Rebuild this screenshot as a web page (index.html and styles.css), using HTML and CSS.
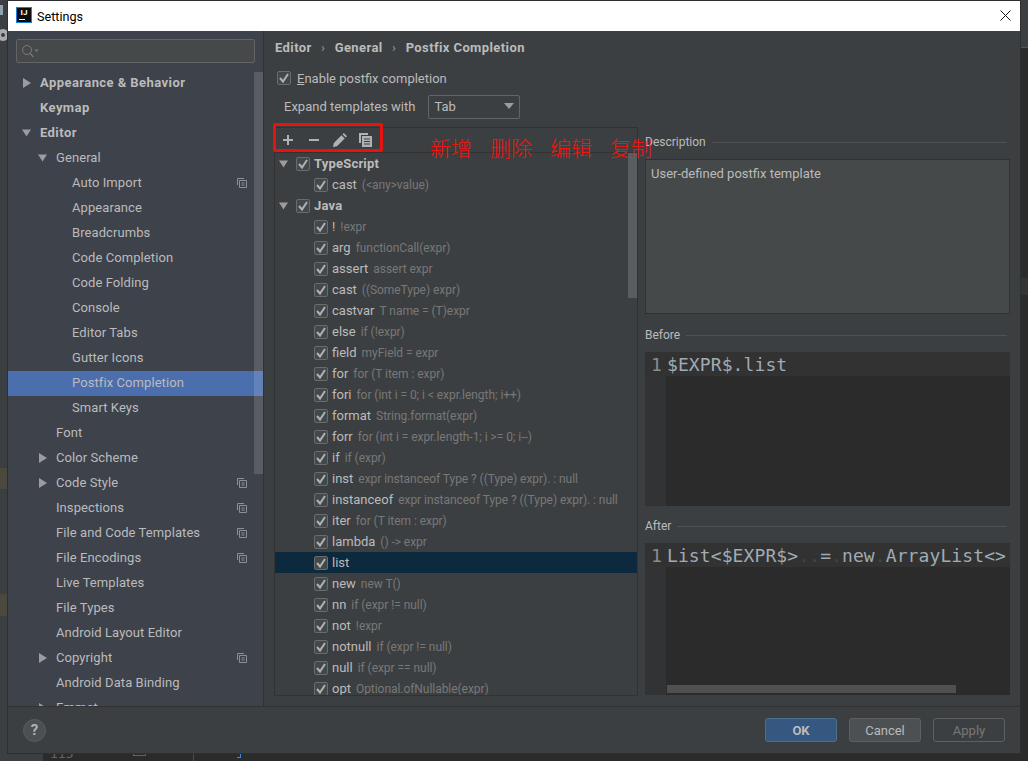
FILE: index.html
```html
<!DOCTYPE html>
<html lang="en">
  <head>
    <meta charset="UTF-8" />
    <meta name="viewport" content="width=device-width, initial-scale=1.0" />
    <title>Settings</title>

    <link rel="stylesheet" href="styles.css">
  </head>
  <body>
    <svg class="defs" width="0" height="0">
      <symbol id="right" viewBox="0 0 8 10"><path d="M0 0 L8 5 L0 10 Z" /></symbol>
      <symbol id="down" viewBox="0 0 10 8"><path d="M0 0 H10 L5 8 Z" /></symbol>
      <symbol id="check" viewBox="0 0 14 14"><path d="M3 7 L6 10.5 L11 3" fill="none" stroke="#afb1b3" stroke-width="2" /></symbol>
      <symbol id="project" viewBox="0 0 10 10">
        <path d="M7 .5 H.5 V7 M2.5 2.5 H9.5 V9.5 H2.5 Z M4.5 5 H7.5 M4.5 7 H7.5" fill="none" stroke="#8b9196" />
      </symbol>
    </svg>

    <!-- IDE behind the dialog -->
    <div class="ide">
      <div class="ide-left">
        <div class="ide-tab"></div>
        <div class="ide-gear"></div>
        <div class="ide-mark mark-1"></div>
        <div class="ide-mark mark-2"></div>
      </div>
      <div class="ide-right">
        <div class="ide-right-top"></div>
        <div class="ide-right-block"></div>
      </div>
      <div class="ide-bottom">
        <span class="ide-num">115</span>
        <span class="ide-fold"></span>
        <span class="ide-line"></span>
        <span class="ide-brace"></span>
      </div>
    </div>

    <div class="dialog">
      <div class="titlebar">
        <div class="logo"><span>IJ</span></div>
        <div class="title">Settings</div>
        <svg class="close" width="11" height="11" viewBox="0 0 11 11">
          <path d="M.5 .5 L10.5 10.5 M10.5 .5 L.5 10.5" stroke="#111" stroke-width="1" />
        </svg>
      </div>

      <div class="content">
        <div class="sidebar">
          <div class="search">
            <svg width="19" height="14" viewBox="0 0 19 14">
              <circle cx="6" cy="6" r="4.5" fill="none" stroke="#787a7c" />
              <path d="M9 9.5 L12.5 13" stroke="#787a7c" stroke-width="1.3" />
              <path d="M13.5 5.5 H17.5 L15.5 8 Z" fill="#787a7c" />
            </svg>
          </div>
          <div class="tree">
            <div class="node l0 bold"><svg class="arrow r"><use href="#right" /></svg>Appearance &amp; Behavior</div>
            <div class="node l0 bold"><span class="arrow"></span>Keymap</div>
            <div class="node l0 bold"><svg class="arrow d"><use href="#down" /></svg>Editor</div>
            <div class="node l1"><svg class="arrow d"><use href="#down" /></svg>General</div>
            <div class="node l2"><span class="arrow"></span>Auto Import<svg class="proj"><use href="#project" /></svg></div>
            <div class="node l2"><span class="arrow"></span>Appearance</div>
            <div class="node l2"><span class="arrow"></span>Breadcrumbs</div>
            <div class="node l2"><span class="arrow"></span>Code Completion</div>
            <div class="node l2"><span class="arrow"></span>Code Folding</div>
            <div class="node l2"><span class="arrow"></span>Console</div>
            <div class="node l2"><span class="arrow"></span>Editor Tabs</div>
            <div class="node l2"><span class="arrow"></span>Gutter Icons</div>
            <div class="node l2 selected"><span class="arrow"></span>Postfix Completion</div>
            <div class="node l2"><span class="arrow"></span>Smart Keys</div>
            <div class="node l1"><span class="arrow"></span>Font</div>
            <div class="node l1"><svg class="arrow r"><use href="#right" /></svg>Color Scheme</div>
            <div class="node l1"><svg class="arrow r"><use href="#right" /></svg>Code Style<svg class="proj"><use href="#project" /></svg></div>
            <div class="node l1"><span class="arrow"></span>Inspections<svg class="proj"><use href="#project" /></svg></div>
            <div class="node l1"><span class="arrow"></span>File and Code Templates<svg class="proj"><use href="#project" /></svg></div>
            <div class="node l1"><span class="arrow"></span>File Encodings<svg class="proj"><use href="#project" /></svg></div>
            <div class="node l1"><span class="arrow"></span>Live Templates</div>
            <div class="node l1"><span class="arrow"></span>File Types</div>
            <div class="node l1"><span class="arrow"></span>Android Layout Editor</div>
            <div class="node l1"><svg class="arrow r"><use href="#right" /></svg>Copyright<svg class="proj"><use href="#project" /></svg></div>
            <div class="node l1"><span class="arrow"></span>Android Data Binding</div>
            <div class="node l1"><svg class="arrow r"><use href="#right" /></svg>Emmet</div>
          </div>
          <div class="side-scroll"></div>
        </div>

        <div class="main">
          <div class="crumbs">
            <span>Editor</span><i>›</i><span>General</span><i>›</i><span>Postfix Completion</span>
          </div>
          <div class="enable">
            <span class="box"><svg><use href="#check" /></svg></span>
            <label><u>E</u>nable postfix completion</label>
          </div>
          <div class="expand">
            <label>Expand templates with</label>
            <div class="combo"><span>Tab</span><svg width="10" height="6" viewBox="0 0 10 6"><path d="M0 0 H10 L5 6 Z" fill="#9a9c9e" /></svg></div>
          </div>

          <div class="columns">
            <div class="list-panel">
              <div class="toolbar">
                <svg class="tool-add" width="12" height="12" viewBox="0 0 12 12"><path d="M6 1 V11 M1 6 H11" stroke="#afb1b3" stroke-width="2" /></svg>
                <svg width="12" height="12" viewBox="0 0 12 12"><path d="M1 6 H11" stroke="#afb1b3" stroke-width="2" /></svg>
                <svg width="14" height="14" viewBox="0 0 14 14"><path d="M0 14 L.8 10 L8.5 2.3 L11.7 5.5 L4 13.2 Z M9.5 1.3 L10.8 0 L14 3.2 L12.7 4.5 Z" fill="#afb1b3" /></svg>
                <svg class="tool-copy" width="13" height="14" viewBox="0 0 13 14"><path d="M0 0 H9 V2 H2 V10 H0 Z M3 3 H13 V14 H3 Z" fill="#afb1b3" /><path d="M5 6 H11 M5 8.5 H11 M5 11 H11" stroke="#3c3f41" /></svg>
              </div>
              <div class="rows">
                <div class="row group"><svg class="arrow d"><use href="#down" /></svg><span class="box"><svg><use href="#check" /></svg></span><b>TypeScript</b></div>
                <div class="row"><span class="box"><svg><use href="#check" /></svg></span><b>cast</b><em>(&lt;any&gt;value)</em></div>
                <div class="row group"><svg class="arrow d"><use href="#down" /></svg><span class="box"><svg><use href="#check" /></svg></span><b>Java</b></div>
                <div class="row"><span class="box"><svg><use href="#check" /></svg></span><b>!</b><em>!expr</em></div>
                <div class="row"><span class="box"><svg><use href="#check" /></svg></span><b>arg</b><em>functionCall(expr)</em></div>
                <div class="row"><span class="box"><svg><use href="#check" /></svg></span><b>assert</b><em>assert expr</em></div>
                <div class="row"><span class="box"><svg><use href="#check" /></svg></span><b>cast</b><em>((SomeType) expr)</em></div>
                <div class="row"><span class="box"><svg><use href="#check" /></svg></span><b>castvar</b><em>T name = (T)expr</em></div>
                <div class="row"><span class="box"><svg><use href="#check" /></svg></span><b>else</b><em>if (!expr)</em></div>
                <div class="row"><span class="box"><svg><use href="#check" /></svg></span><b>field</b><em>myField = expr</em></div>
                <div class="row"><span class="box"><svg><use href="#check" /></svg></span><b>for</b><em>for (T item : expr)</em></div>
                <div class="row"><span class="box"><svg><use href="#check" /></svg></span><b>fori</b><em>for (int i = 0; i &lt; expr.length; i++)</em></div>
                <div class="row"><span class="box"><svg><use href="#check" /></svg></span><b>format</b><em>String.format(expr)</em></div>
                <div class="row"><span class="box"><svg><use href="#check" /></svg></span><b>forr</b><em>for (int i = expr.length-1; i &gt;= 0; i--)</em></div>
                <div class="row"><span class="box"><svg><use href="#check" /></svg></span><b>if</b><em>if (expr)</em></div>
                <div class="row"><span class="box"><svg><use href="#check" /></svg></span><b>inst</b><em>expr instanceof Type ? ((Type) expr). : null</em></div>
                <div class="row"><span class="box"><svg><use href="#check" /></svg></span><b>instanceof</b><em>expr instanceof Type ? ((Type) expr). : null</em></div>
                <div class="row"><span class="box"><svg><use href="#check" /></svg></span><b>iter</b><em>for (T item : expr)</em></div>
                <div class="row"><span class="box"><svg><use href="#check" /></svg></span><b>lambda</b><em>() -&gt; expr</em></div>
                <div class="row current"><span class="box"><svg><use href="#check" /></svg></span><b>list</b></div>
                <div class="row"><span class="box"><svg><use href="#check" /></svg></span><b>new</b><em>new T()</em></div>
                <div class="row"><span class="box"><svg><use href="#check" /></svg></span><b>nn</b><em>if (expr != null)</em></div>
                <div class="row"><span class="box"><svg><use href="#check" /></svg></span><b>not</b><em>!expr</em></div>
                <div class="row"><span class="box"><svg><use href="#check" /></svg></span><b>notnull</b><em>if (expr != null)</em></div>
                <div class="row"><span class="box"><svg><use href="#check" /></svg></span><b>null</b><em>if (expr == null)</em></div>
                <div class="row"><span class="box"><svg><use href="#check" /></svg></span><b>opt</b><em>Optional.ofNullable(expr)</em></div>
              </div>
              <div class="list-scroll"></div>
            </div>

            <div class="details">
              <div class="sep"><span>Description</span></div>
              <div class="desc">User-defined postfix template</div>
              <div class="sep before"><span>Before</span></div>
              <div class="editor">
                <div class="code-line"><span class="gutter-num">1</span><span>$EXPR$.list</span></div>
                <div class="code-rest"></div>
              </div>
              <div class="sep after"><span>After</span></div>
              <div class="editor grow">
                <div class="code-line"><span class="gutter-num">1</span><span>List&lt;$EXPR$&gt;<i>.</i><i>.</i>=<i>.</i>new<i>.</i>ArrayList&lt;&gt;</span></div>
                <div class="code-rest"></div>
                <div class="h-scroll"></div>
              </div>
            </div>
          </div>
        </div>
      </div>

      <div class="footer">
        <div class="help">?</div>
        <div class="buttons">
          <div class="btn ok">OK</div>
          <div class="btn">Cancel</div>
          <div class="btn off">Apply</div>
        </div>
      </div>

      <!-- red notes drawn on the screenshot -->
      <div class="note-box"></div>
      <div class="notes">
        <span>新增</span><span>删除</span><span>编辑</span><span>复制</span>
      </div>
    </div>
  </body>
</html>
```

FILE: styles.css
```css
* {
  margin: 0;
  padding: 0;
  box-sizing: border-box;
}

body {
  width: 1028px;
  height: 761px;
  overflow: hidden;
  position: relative;
  background: #2b2b2b;
  font-family: Roboto, "Liberation Sans", sans-serif;
  font-size: 13px;
  color: #bbbbbb;
}

.defs {
  position: absolute;
}

/* ide behind */
.ide-left {
  position: absolute;
  left: 0;
  top: 0;
  width: 43px;
  height: 761px;
  background: #3c3f41;
}

.ide-tab {
  position: absolute;
  left: 0;
  top: 5px;
  width: 3px;
  height: 10px;
  background: #8fa3ad;
}

.ide-gear {
  position: absolute;
  left: -3px;
  top: 29px;
  width: 12px;
  height: 12px;
  border: 4px solid #a9abad;
  border-radius: 50%;
}

.ide-mark {
  position: absolute;
  left: 0;
  width: 7px;
  background: #4b483d;
}

.mark-1 {
  top: 468px;
  height: 21px;
}

.mark-2 {
  top: 594px;
  height: 22px;
}

.ide-right {
  position: absolute;
  right: 0;
  top: 0;
  width: 8px;
  height: 761px;
}

.ide-right-top {
  height: 48px;
  background: #3c3f41;
  border-bottom: 1px solid #555;
}

.ide-right-block {
  position: absolute;
  top: 278px;
  width: 8px;
  height: 17px;
  background: #333435;
}

.ide-bottom {
  position: absolute;
  left: 43px;
  right: 0;
  top: 753px;
  height: 8px;
  background: #2b2b2b;
  overflow: hidden;
}

.ide-num {
  position: absolute;
  left: 7px;
  top: -7px;
  color: #606366;
  font-family: "DejaVu Sans Mono", monospace;
  font-size: 13px;
}

.ide-fold {
  position: absolute;
  left: 90px;
  top: 0;
  width: 13px;
  height: 3px;
  border: 1px solid #606366;
  border-top: 0;
}

.ide-line {
  position: absolute;
  left: 150px;
  top: 0;
  width: 1px;
  height: 8px;
  background: #4a4a4a;
}

.ide-brace {
  position: absolute;
  left: 194px;
  top: 0;
  width: 4px;
  height: 5px;
  border: 1px solid #2f8fe8;
  border-top: 0;
  border-left-width: 0;
}

/* dialog */
.dialog {
  position: absolute;
  left: 7px;
  top: 0;
  width: 1014px;
  height: 754px;
  display: flex;
  flex-direction: column;
  background: #3c3f41;
  border: 1px solid #2d2f30;
}

.titlebar {
  height: 30px;
  flex: none;
  background: #fff;
  display: flex;
  align-items: center;
  padding-left: 8px;
}

.logo {
  width: 16px;
  height: 16px;
  margin-bottom: 2px;
  background: #0c0c0c;
  border: 1px solid #1a7ee0;
  color: #fff;
  font-size: 8px;
  font-weight: 700;
  line-height: 10px;
  text-align: center;
  position: relative;
}

.logo::after {
  content: "";
  position: absolute;
  left: 2px;
  bottom: 2px;
  width: 6px;
  height: 1px;
  background: #fff;
}

.title {
  margin-left: 5px;
  color: #000;
  font-size: 12.6px;
}

.close {
  margin-left: auto;
  margin-right: 9px;
  margin-bottom: 2px;
}

.content {
  flex: 1;
  display: flex;
  min-height: 0;
}

/* left tree */
.sidebar {
  width: 256px;
  flex: none;
  background: #3e424b;
  border-right: 1px solid #323232;
  position: relative;
  overflow: hidden;
}

.search {
  margin: 8px 0 0 8px;
  width: 239px;
  height: 24px;
  background: #45494a;
  border: 1px solid #646464;
  border-radius: 2px;
  display: flex;
  align-items: center;
  padding-left: 4px;
}

.tree {
  margin-top: 8px;
  letter-spacing: 0.08px;
}

.node {
  height: 25px;
  padding-bottom: 2px;
  display: flex;
  align-items: center;
  position: relative;
}

.node.l0 {
  padding-left: 15px;
}

.node.l1 {
  padding-left: 31px;
}

.node.l2 {
  padding-left: 47px;
}

.tree .bold {
  font-weight: 700;
  letter-spacing: 0.43px;
}

.arrow {
  width: 17px;
  flex: none;
  fill: #9a9c9e;
}

.arrow.r {
  width: 8px;
  height: 10px;
  margin-right: 9px;
}

.arrow.d {
  width: 9px;
  height: 8px;
  margin-left: -1px;
  margin-right: 9px;
}

.proj {
  position: absolute;
  left: 229px;
  top: 7px;
  width: 10px;
  height: 10px;
}

.selected {
  background: #4b6eaf;
}

.side-scroll {
  position: absolute;
  left: 246px;
  top: 41px;
  width: 9px;
  height: 402px;
  background: rgba(255, 255, 255, 0.14);
}

/* right side */
.main {
  flex: 1;
  min-width: 0;
  padding: 0 10px 0 11px;
  display: flex;
  flex-direction: column;
}

.crumbs {
  height: 32px;
  display: flex;
  align-items: center;
  font-weight: 700;
  letter-spacing: 0.4px;
}

.crumbs i {
  width: 23px;
  text-align: center;
  font-style: normal;
  font-weight: 400;
  color: #999;
}

.enable {
  margin-top: 5px;
  height: 20px;
  display: flex;
  align-items: center;
  padding-left: 2px;
}

.enable label {
  margin-left: 6px;
}

.box {
  width: 14px;
  height: 14px;
  flex: none;
  display: block;
  border: 1px solid #6b6b6b;
  border-radius: 2px;
  background: #43494a;
  position: relative;
}

.box svg {
  position: absolute;
  left: -1px;
  top: -1px;
  width: 14px;
  height: 14px;
}

.expand {
  margin-top: 7px;
  height: 24px;
  display: flex;
  align-items: center;
  padding-left: 9px;
}

.expand label {
  padding-bottom: 2px;
}

.combo {
  margin-left: 13px;
  width: 92px;
  height: 24px;
  border: 1px solid #646464;
  border-radius: 2px;
  display: flex;
  align-items: center;
  justify-content: space-between;
  padding: 0 5px 2px;
}

.columns {
  margin-top: 6px;
  margin-left: -1px;
  flex: 1;
  min-height: 0;
  display: flex;
  align-items: flex-start;
  gap: 7px;
}

.list-panel {
  width: 364px;
  flex: none;
  margin-top: 2px;
  height: 569px;
  border: 1px solid #323232;
  position: relative;
  overflow: hidden;
}

.toolbar {
  height: 25px;
  border-bottom: 1px solid #323232;
  display: flex;
  align-items: center;
  padding-left: 7px;
  gap: 13px;
}

.tool-add {
  margin-right: 1px;
}

.tool-copy {
  margin-left: -1px;
}

.row {
  height: 21px;
  display: flex;
  align-items: center;
  padding-left: 39px;
  white-space: nowrap;
}

.row.group {
  padding-left: 4px;
}

.row .arrow.d {
  margin-left: 0;
  margin-right: 8px;
}

.row b {
  margin-left: 4px;
  font-weight: 400;
}

.row.group b {
  font-weight: 700;
  letter-spacing: 0.2px;
}

.row em {
  margin-left: 5px;
  font-style: normal;
  font-size: 12px;
  letter-spacing: -0.05px;
  color: #787878;
}

.row.current {
  background: #0d293e;
}

.list-scroll {
  position: absolute;
  right: 0;
  top: 25px;
  width: 9px;
  height: 145px;
  background: #5a5d5f;
}

.details {
  flex: 1;
  min-width: 0;
  height: 570px;
  display: flex;
  flex-direction: column;
}

.sep {
  margin-top: 7px;
  height: 20px;
  display: flex;
  align-items: center;
  padding-right: 3px;
  font-size: 12px;
  flex: none;
}

.sep::after {
  content: "";
  flex: 1;
  height: 1px;
  margin-left: 6px;
  background: #515151;
}

.sep.before {
  margin-top: 11px;
}

.sep.after {
  margin-top: 10px;
}

.desc {
  margin-top: 7px;
  height: 155px;
  flex: none;
  background: #45494a;
  border: 1px solid #2f3234;
  padding: 6px 5px;
}

.editor {
  margin-top: 7px;
  height: 154px;
  flex: none;
  background: #313335;
  display: flex;
  flex-direction: column;
  position: relative;
  font-family: "DejaVu Sans Mono", monospace;
  font-size: 18px;
  letter-spacing: 0.1px;
  color: #9fabb5;
}

.editor.grow {
  flex: 1;
  height: auto;
}

.code-line {
  height: 24px;
  flex: none;
  background: #323232;
  display: flex;
  align-items: center;
  white-space: pre;
  overflow: hidden;
}

.code-line i {
  font-style: normal;
  color: #444;
}

.gutter-num {
  width: 22px;
  flex: none;
  text-align: right;
  padding-right: 5px;
  color: #8a8c8e;
}

.code-rest {
  flex: 1;
  margin-left: 21px;
  background: #2b2b2b;
}

.h-scroll {
  position: absolute;
  left: 22px;
  bottom: 2px;
  width: 289px;
  height: 8px;
  background: #505050;
}

/* bottom */
.footer {
  height: 47px;
  flex: none;
  border-top: 1px solid #323232;
  display: flex;
  align-items: center;
  justify-content: space-between;
  padding: 0 15px;
}

.help {
  width: 23px;
  height: 23px;
  border-radius: 50%;
  background: #4c5052;
  border: 1px solid #5a5d5f;
  text-align: center;
  line-height: 21px;
  font-size: 15px;
  font-weight: 700;
  color: #afb1b3;
}

.buttons {
  display: flex;
  gap: 12px;
}

.btn {
  width: 72px;
  height: 24px;
  border: 1px solid #5e6060;
  border-radius: 3px;
  background: #4c5052;
  text-align: center;
  line-height: 23px;
}

.btn.ok {
  background: #365880;
  border-color: #4c708c;
  font-weight: 700;
}

.btn.off {
  background: none;
  color: #777;
}

/* red notes */
.note-box {
  position: absolute;
  left: 265px;
  top: 122px;
  width: 110px;
  height: 29px;
  border: 3px solid #e8120e;
  border-radius: 2px;
}

.notes {
  position: absolute;
  left: 422px;
  top: 131px;
  display: flex;
  gap: 18px;
  font-family: "Noto Sans CJK SC", sans-serif;
  font-size: 21px;
  font-weight: 300;
  color: #f0160f;
}
```
